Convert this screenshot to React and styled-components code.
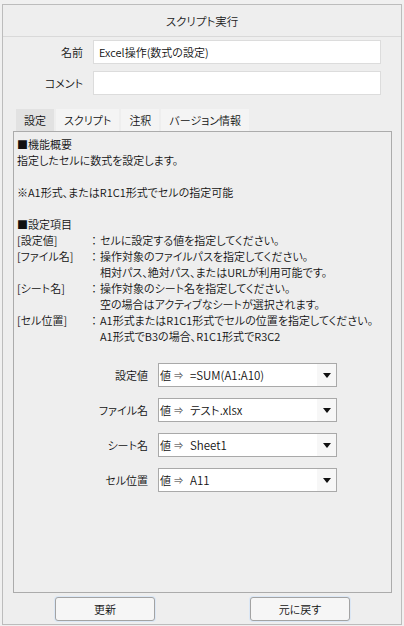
import styled, { createGlobalStyle } from "styled-components";

const GlobalStyle = createGlobalStyle`
  html, body {
    margin: 0;
    padding: 0;
    background: #f0f0f0;
  }
  body {
    font-family: "Noto Sans CJK JP", "Noto Sans", sans-serif;
    font-size: 11px;
    font-weight: 350;
    font-feature-settings: "palt";
    color: #111;
  }
  #root {
    padding: 4px 0 0 2px;
  }
`;

const Frame = styled.div`
  box-sizing: border-box;
  width: 400px;
  height: 621px;
  border: 1px solid #bcbcbc;
  background: #eeeeee;
  display: flex;
  flex-direction: column;
`;

const Header = styled.div`
  height: 31px;
  border-bottom: 1px solid #d9d9d9;
  display: flex;
  align-items: center;
  justify-content: center;
  font-size: 11.5px;
  color: #222;
`;

const Form = styled.div`
  display: flex;
  flex-direction: column;
  gap: 7px;
  padding-top: 3px;
`;

const FormRow = styled.div`
  display: flex;
  align-items: center;
`;

const FormLabel = styled.label`
  width: 80px;
  margin-right: 10px;
  text-align: right;
`;

const TextInput = styled.div`
  box-sizing: border-box;
  width: 288px;
  height: 24px;
  background: #fff;
  border: 1px solid #dcdcdc;
  padding: 0 5px;
  display: flex;
  align-items: center;
`;

const Tabs = styled.div`
  display: flex;
  gap: 2px;
  margin: 14px 0 0 13px;
`;

const Tab = styled.div`
  height: 22px;
  padding: 0 8px;
  display: flex;
  align-items: center;
  background: ${(p) => (p.active ? "#e2e2e2" : "#f4f4f4")};
`;

const Panel = styled.div`
  flex: 1;
  margin: 0 9px 0 10px;
  border: 1px solid #ababab;
  padding: 4px 3px;
  display: flex;
  flex-direction: column;
`;

const Line = styled.div`
  height: 16px;
  line-height: 16px;
  white-space: nowrap;
`;

const Entry = styled.div`
  display: flex;
  line-height: 16px;
`;

const EntryKey = styled.div`
  width: 71px;
  white-space: nowrap;
`;

const EntryColon = styled.div`
  width: 12px;
  text-align: center;
`;

const EntryBody = styled.div`
  display: flex;
  flex-direction: column;
  white-space: nowrap;
`;

const Fields = styled.div`
  display: flex;
  flex-direction: column;
  gap: 11px;
  margin-top: 19px;
`;

const FieldRow = styled.div`
  display: flex;
  align-items: center;
`;

const FieldLabel = styled.div`
  width: 131px;
  margin-right: 10px;
  text-align: right;
`;

const Select = styled.div`
  box-sizing: border-box;
  width: 179px;
  height: 24px;
  background: #fff;
  border: 1px solid #a9a9a9;
  display: flex;
  align-items: center;
`;

const Prefix = styled.span`
  width: 30px;
  padding-left: 1px;
  display: flex;
  align-items: center;
  gap: 3px;
`;

const Arrow = styled.span`
  font-size: 9px;
  color: #333;
`;

const Value = styled.span`
  flex: 1;
  font-size: 11.5px;
`;

const DropButton = styled.span`
  width: 19px;
  height: 100%;
  background: #f7f7f7;
  display: flex;
  align-items: center;
  justify-content: center;
`;

const ButtonBar = styled.div`
  display: flex;
  justify-content: space-between;
  padding: 4px 51px 3px 52px;
`;

const Button = styled.button`
  box-sizing: border-box;
  width: 100px;
  height: 24px;
  border: 1px solid #a3a3a3;
  border-radius: 3px;
  background: #f6f6f6;
  box-shadow: 0 0 0 1px #dbe7f5;
  font: inherit;
  color: #111;
  padding: 0;
`;

const entries = [
  { key: "[設定値]", lines: ["セルに設定する値を指定してください。"] },
  {
    key: "[ファイル名]",
    lines: ["操作対象のファイルパスを指定してください。", "相対パス、絶対パス、またはURLが利用可能です。"],
  },
  {
    key: "[シート名]",
    lines: ["操作対象のシート名を指定してください。", "空の場合はアクティブなシートが選択されます。"],
  },
  {
    key: "[セル位置]",
    lines: ["A1形式またはR1C1形式でセルの位置を指定してください。", "A1形式でB3の場合、R1C1形式でR3C2"],
  },
];

const fields = [
  { label: "設定値", value: "=SUM(A1:A10)" },
  { label: "ファイル名", value: "テスト.xlsx" },
  { label: "シート名", value: "Sheet1" },
  { label: "セル位置", value: "A11" },
];

const tabs = ["設定", "スクリプト", "注釈", "バージョン情報"];

const Caret = () => (
  <svg width="8" height="5" viewBox="0 0 8 5">
    <polygon points="0,0 8,0 4,5" fill="#111" />
  </svg>
);

const App = () => {
  return (
    <>
      <GlobalStyle />
      <Frame>
        <Header>スクリプト実行</Header>
        <Form>
          <FormRow>
            <FormLabel>名前</FormLabel>
            <TextInput>Excel操作(数式の設定)</TextInput>
          </FormRow>
          <FormRow>
            <FormLabel>コメント</FormLabel>
            <TextInput />
          </FormRow>
        </Form>
        <Tabs>
          {tabs.map((t, i) => (
            <Tab key={t} active={i === 0}>
              {t}
            </Tab>
          ))}
        </Tabs>
        <Panel>
          <Line>■機能概要</Line>
          <Line>指定したセルに数式を設定します。</Line>
          <Line />
          <Line>※A1形式、またはR1C1形式でセルの指定可能</Line>
          <Line />
          <Line>■設定項目</Line>
          {entries.map((e) => (
            <Entry key={e.key}>
              <EntryKey>{e.key}</EntryKey>
              <EntryColon>：</EntryColon>
              <EntryBody>
                {e.lines.map((l) => (
                  <span key={l}>{l}</span>
                ))}
              </EntryBody>
            </Entry>
          ))}
          <Fields>
            {fields.map((f) => (
              <FieldRow key={f.label}>
                <FieldLabel>{f.label}</FieldLabel>
                <Select>
                  <Prefix>
                    値<Arrow>⇒</Arrow>
                  </Prefix>
                  <Value>{f.value}</Value>
                  <DropButton>
                    <Caret />
                  </DropButton>
                </Select>
              </FieldRow>
            ))}
          </Fields>
        </Panel>
        <ButtonBar>
          <Button>更新</Button>
          <Button>元に戻す</Button>
        </ButtonBar>
      </Frame>
    </>
  );
};

export default App;
